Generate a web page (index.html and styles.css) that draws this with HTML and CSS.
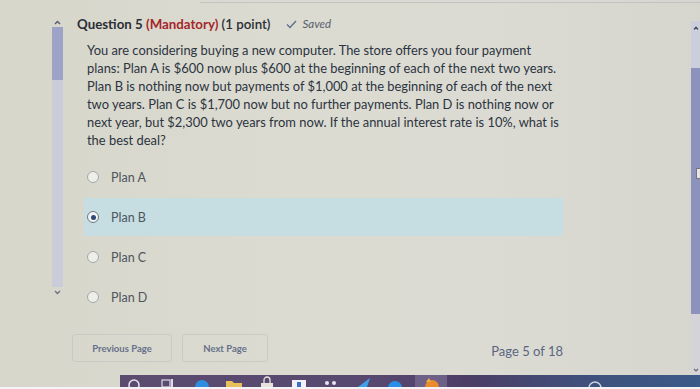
FILE: index.html
```html
<!DOCTYPE html>
<html>
<head>
<meta charset="utf-8">
<link rel="stylesheet" href="styles.css">
</head>
<body>
<div class="screen">
  <div class="main">
    <div class="topline"></div>
    <div class="cols">
      <div class="lscroll">
        <div class="arr">
          <svg width="7" height="5" viewBox="0 0 7 5"><path d="M1 4 L3.5 1.5 L6 4" fill="none" stroke="#50566e" stroke-width="1.3"/></svg>
        </div>
        <div class="lthumb"></div>
        <div class="ltrack"></div>
        <div class="arr down">
          <svg width="7" height="5" viewBox="0 0 7 5"><path d="M1 1 L3.5 3.5 L6 1" fill="none" stroke="#6a6f80" stroke-width="1.3"/></svg>
        </div>
      </div>

      <div class="content">
        <div class="qhead">
          <span class="qtitle">Question 5 <span class="mand">(Mandatory)</span> <span class="pts">(1 point)</span></span>
          <span class="saved">
            <svg width="11" height="9" viewBox="0 0 11 9"><path d="M1 4.5 L4 7.5 L10 1" fill="none" stroke="#5d6e8e" stroke-width="1.4"/></svg>
            <i>Saved</i>
          </span>
        </div>
        <p class="qtext">You are considering buying a new computer. The store offers you four payment<br>plans: Plan A is $600 now plus $600 at the beginning of each of the next two years.<br>Plan B is nothing now but payments of $1,000 at the beginning of each of the next<br>two years. Plan C is $1,700 now but no further payments. Plan D is nothing now or<br>next year, but $2,300 two years from now. If the annual interest rate is 10%, what is<br>the best deal?</p>

        <div class="options">
          <div class="opt"><span class="radio"></span><span class="lbl">Plan A</span></div>
          <div class="opt sel"><span class="radio on"></span><span class="lbl">Plan B</span></div>
          <div class="opt"><span class="radio"></span><span class="lbl">Plan C</span></div>
          <div class="opt"><span class="radio"></span><span class="lbl">Plan D</span></div>
        </div>

        <div class="nav">
          <div class="btn prev">Previous Page</div>
          <div class="btn next">Next Page</div>
          <div class="pageinfo">Page 5 of 18</div>
        </div>
      </div>

      <div class="rscroll">
        <div class="rarr">
          <svg width="6" height="4" viewBox="0 0 6 4"><path d="M1 3.5 L3 1.2 L5 3.5" fill="none" stroke="#444a60" stroke-width="1.2"/></svg>
        </div>
        <div class="rtrack1"></div>
        <div class="rthumb"><span class="cursor"></span></div>
        <div class="rtrack2"></div>
        <div class="rarr down">
          <svg width="6" height="4" viewBox="0 0 6 4"><path d="M1 1 L3 3 L5 1" fill="none" stroke="#666a78" stroke-width="1.2"/></svg>
        </div>
      </div>
    </div>
  </div>

  <div class="taskrow">
    <div class="taskbar">
      <svg width="580" height="12" viewBox="0 0 580 12">
        <rect x="295" y="0" width="32" height="12" fill="#7a6d94" opacity="0.7"/>
        <circle cx="14" cy="10" r="5" fill="none" stroke="#e8e6ee" stroke-width="1.5"/>
        <rect x="42" y="5" width="8" height="7" fill="none" stroke="#dcdae6" stroke-width="1.2"/>
        <rect x="51" y="4" width="2" height="8" fill="#dcdae6"/>
        <circle cx="82" cy="12" r="7" fill="#2d8ee0"/>
        <path d="M106 6 h6 l2 2 h8 v6 h-16 z" fill="#e6c05a"/>
        <path d="M141 8 h12 v6 h-12 z" fill="#e8e2dc"/>
        <path d="M144 8 v-3 a3 3 0 0 1 6 0 v3" fill="none" stroke="#e8e2dc" stroke-width="1.3"/>
        <rect x="172" y="5" width="14" height="9" fill="#f2f2f6"/>
        <rect x="177" y="7" width="4" height="5" fill="#3d6fc7"/>
        <circle cx="207" cy="8" r="2" fill="#e6e6f0"/>
        <circle cx="214" cy="8" r="2" fill="#e6e6f0"/>
        <path d="M238 12 L250 3 L247 12 z" fill="#3fa0e8"/>
        <circle cx="275" cy="13" r="7" fill="#2a8fe6"/>
        <circle cx="312" cy="12" r="7" fill="#e98a2d"/>
        <path d="M306 7 l3 -4 l2 4 z" fill="#f0b040"/>
        <circle cx="475" cy="13" r="6" fill="none" stroke="#c8d0e0" stroke-width="1.5"/>
      </svg>
    </div>
  </div>
  <div class="bottomwhite"></div>
</div>
</body>
</html>
```

FILE: styles.css
```css
html, body {
  margin: 0;
  padding: 0;
}
body {
  width: 700px;
  height: 389px;
  overflow: hidden;
  font-family: Lato, "Open Sans", sans-serif;
}
.screen {
  width: 700px;
  height: 389px;
  display: flex;
  flex-direction: column;
  background: linear-gradient(90deg, #d7d6cb 0%, #dcdbd1 40%, #dbdbd3 70%, #d6d6ce 100%);
}
.main {
  height: 375px;
  display: flex;
  flex-direction: column;
}
.topline {
  height: 1px;
  margin-top: 2px;
  margin-left: 200px;
  background: #c2c3c4;
}
.cols {
  flex: 1;
  display: flex;
}

/* left scrollbar */
.lscroll {
  margin-left: 52px;
  margin-top: 14px;
  width: 11px;
  display: flex;
  flex-direction: column;
}
.arr {
  height: 10px;
  display: flex;
  align-items: center;
  justify-content: center;
}
.lthumb {
  height: 53px;
  background: #9da3c6;
}
.ltrack {
  height: 207px;
  background: #cbccda;
}
.arr.down {
  height: 10px;
}

/* content */
.content {
  width: 492px;
  margin-left: 14px;
  padding-top: 12px;
  display: flex;
  flex-direction: column;
}
.qhead {
  height: 18px;
  line-height: 18px;
  display: flex;
  align-items: center;
  font-size: 13.3px;
  font-weight: 700;
  color: #2a2e35;
}
.mand {
  color: #a4272c;
}
.pts {
  font-weight: 600;
}
.saved {
  margin-left: 16px;
  display: flex;
  align-items: center;
  gap: 5px;
  font-size: 11.5px;
  font-weight: 400;
  color: #55606f;
}
.qtext {
  margin: 8px 0 0 10px;
  font-size: 12.9px;
  line-height: 18px;
  color: #2b3440;
  white-space: nowrap;
}
.options {
  margin-top: 9px;
  margin-left: 7px;
  display: flex;
  flex-direction: column;
}
.opt {
  width: 479px;
  height: 38px;
  margin-bottom: 2px;
  display: flex;
  align-items: center;
  padding-left: 3px;
  box-sizing: border-box;
}
.opt.sel {
  background: #c6dde2;
}
.radio {
  width: 10px;
  height: 10px;
  border: 1.5px solid #a2a7ac;
  border-radius: 50%;
  background: #efefea;
  display: flex;
  align-items: center;
  justify-content: center;
}
.radio.on {
  border-color: #70787f;
  background: #f2f4f4;
}
.radio.on::after {
  content: "";
  width: 5px;
  height: 5px;
  border-radius: 50%;
  background: #2f4a78;
}
.lbl {
  margin-left: 12px;
  font-size: 12.5px;
  color: #4d5660;
}

/* navigation */
.nav {
  margin-top: 16px;
  margin-left: -5px;
  width: 491px;
  display: flex;
  align-items: center;
}
.btn {
  height: 28px;
  box-sizing: border-box;
  border: 1px solid #cacac4;
  border-radius: 3px;
  display: flex;
  align-items: center;
  justify-content: center;
  font-size: 9.5px;
  font-weight: 700;
  color: #66708a;
}
.prev {
  width: 100px;
}
.next {
  width: 86px;
  margin-left: 10px;
}
.pageinfo {
  margin-left: auto;
  margin-top: 6px;
  font-size: 13px;
  color: #5a6582;
}

/* right scrollbar */
.rscroll {
  margin-left: auto;
  margin-top: 18px;
  width: 9px;
  display: flex;
  flex-direction: column;
  background: #cdcedb;
}
.rarr {
  height: 13px;
  display: flex;
  align-items: center;
  justify-content: center;
}
.rtrack1 {
  height: 34px;
}
.rthumb {
  height: 246px;
  background: #8b92bb;
  position: relative;
}
.cursor {
  position: absolute;
  left: 5px;
  top: 100px;
  width: 3px;
  height: 9px;
  background: #e4e4ea;
  border: 1px solid #777;
}
.rtrack2 {
  flex: 1;
  background: #d4d4d8;
}
.rarr.down {
  background: #d4d4d8;
  height: 10px;
}

/* taskbar */
.taskrow {
  height: 12px;
  display: flex;
}
.taskbar {
  margin-left: 120px;
  width: 580px;
  height: 12px;
  background: linear-gradient(90deg, #5c4c70 0%, #574870 45%, #4b3d66 60%, #40507c 80%, #3a5a88 100%);
  overflow: hidden;
}
.taskbar svg {
  display: block;
}
.bottomwhite {
  height: 2px;
  background: #f4f4f6;
}
```
